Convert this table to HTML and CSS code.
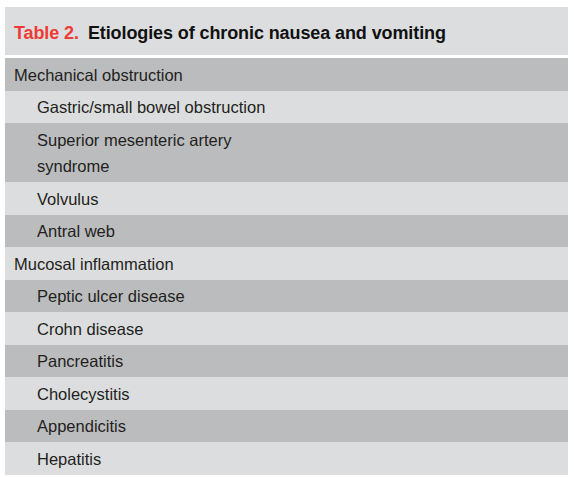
FILE: index.html
```html
<!DOCTYPE html>
<html lang="en">
<head>
	<meta charset="UTF-8">
	<title>Table 2</title>
	<link rel="stylesheet" href="styles.css">
</head>
<body>
	<div class="table">
		<div class="caption"><span class="label">Table 2.</span>Etiologies of chronic nausea and vomiting</div>
		<div class="rows">
			<div class="row dark">Mechanical obstruction</div>
			<div class="row sub">Gastric/small bowel obstruction</div>
			<div class="row sub dark">Superior mesenteric artery syndrome</div>
			<div class="row sub">Volvulus</div>
			<div class="row sub dark">Antral web</div>
			<div class="row">Mucosal inflammation</div>
			<div class="row sub dark">Peptic ulcer disease</div>
			<div class="row sub">Crohn disease</div>
			<div class="row sub dark">Pancreatitis</div>
			<div class="row sub">Cholecystitis</div>
			<div class="row sub dark">Appendicitis</div>
			<div class="row sub">Hepatitis</div>
		</div>
	</div>
</body>
</html>
```

FILE: styles.css
```css
body{
	margin: 0;
	background: #fff;
	font-family: "Liberation Sans", Arial, sans-serif;
	color: #231f20;
}
.table{
	margin: 7px 6px 0 5px;
}
.caption{
	background: #dcdddf;
	height: 48px;
	padding: 4px 9px 0;
	box-sizing: border-box;
	display: flex;
	align-items: center;
	font-size: 18px;
	font-weight: bold;
	letter-spacing: -0.1px;
	color: #111;
}
.label{
	color: #ee3b33;
	margin-right: 9px;
}
.rows{
	margin-top: 3px;
}
.row{
	background: #dcdddf;
	padding: 3.5px 9px 2.5px;
	font-size: 16.5px;
	line-height: 26.5px;
}
.row.dark{
	background: #bbbcbe;
}
.row.sub{
	padding-left: 32px;
	padding-right: 270px;
}
```
